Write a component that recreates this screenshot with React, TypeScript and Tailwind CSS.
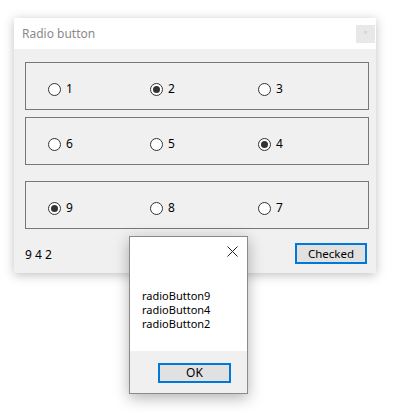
import React from "react";

type Opt = { label: string; checked?: boolean };

const Radio = ({ label, checked }: Opt) => (
  <div className="flex items-center gap-[5px]">
    <span className="flex h-[13px] w-[13px] items-center justify-center rounded-full border border-[#333] bg-white">
      {checked && <span className="h-[7px] w-[7px] rounded-full bg-[#333]" />}
    </span>
    <span className="text-[12px] text-black">{label}</span>
  </div>
);

const Group = ({ items, className }: { items: Opt[]; className?: string }) => (
  <div className={`grid h-[48px] grid-cols-[102px_108px_1fr] items-center border border-[#777] pl-[22px] ${className ?? ""}`}>
    {items.map((o) => (
      <div key={o.label} className="pt-[6px]">
        <Radio {...o} />
      </div>
    ))}
  </div>
);

export default function App() {
  return (
    <div
      className="relative h-[413px] w-[406px] overflow-hidden bg-white"
      style={{ fontFamily: '"Noto Sans", "Open Sans", sans-serif' }}
    >
      <div className="ml-[14px] mt-[18px] flex h-[255px] w-[362px] flex-col bg-[#f0f0f0] shadow-[0_2px_10px_rgba(0,0,0,0.25)]">
        <div className="flex h-[31px] items-center justify-between bg-white pl-[8px] pr-[1px]">
          <span className="text-[12px] text-[#8a8a8a]">Radio button</span>
          <span className="flex h-[18px] w-[19px] items-center justify-center bg-[#e8e8e8] text-[7px] text-[#c8c8c8]">
            ×
          </span>
        </div>
        <div className="flex flex-1 flex-col pl-[11px] pr-[7px] pt-[13px]">
          <Group items={[{ label: "1" }, { label: "2", checked: true }, { label: "3" }]} />
          <Group
            className="mt-[7px]"
            items={[{ label: "6" }, { label: "5" }, { label: "4", checked: true }]}
          />
          <Group
            className="mt-[16px]"
            items={[{ label: "9", checked: true }, { label: "8" }, { label: "7" }]}
          />
          <div className="mt-[14px] flex items-center justify-between pr-[2px]">
            <span className="pt-[3px] text-[12px] text-black">9 4 2</span>
            <button className="h-[21px] w-[72px] border-2 border-[#0078d7] bg-[#e1e1e1] text-[11.5px] leading-none text-black">
              Checked
            </button>
          </div>
        </div>
      </div>

      <div className="absolute left-[129px] top-[236px] flex h-[158px] w-[119px] flex-col border border-[#8a8a8a] bg-white shadow-[0_4px_14px_rgba(0,0,0,0.3)]">
        <div className="flex flex-1 flex-col">
          <div className="flex justify-end pr-[9px] pt-[9px]">
            <svg width="11" height="11" viewBox="0 0 11 11" fill="none" stroke="#222" strokeWidth="1">
              <path d="M0.5 0.5 L10.5 10.5 M10.5 0.5 L0.5 10.5" />
            </svg>
          </div>
          <div className="pl-[12px] pt-[32px] text-[11px] leading-[14px] text-black">
            <div>radioButton9</div>
            <div>radioButton4</div>
            <div>radioButton2</div>
          </div>
        </div>
        <div className="flex h-[42px] items-center justify-center bg-[#f0f0f0] pl-[12px] pt-[2px]">
          <button className="h-[20px] w-[73px] border-2 border-[#0078d7] bg-[#e1e1e1] text-[12px] leading-none text-black">
            OK
          </button>
        </div>
      </div>
    </div>
  );
}
